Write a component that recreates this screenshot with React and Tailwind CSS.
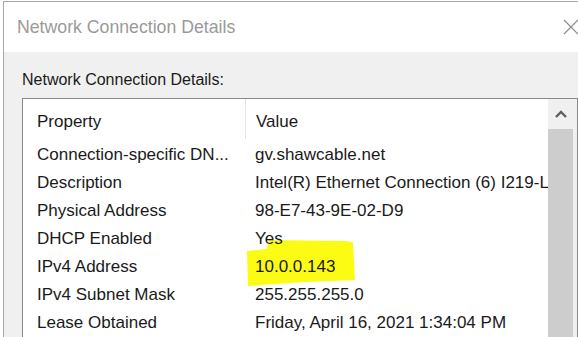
const rows = [
  ['Connection-specific DN...', 'gv.shawcable.net'],
  ['Description', 'Intel(R) Ethernet Connection (6) I219-LM'],
  ['Physical Address', '98-E7-43-9E-02-D9'],
  ['DHCP Enabled', 'Yes'],
  ['IPv4 Address', '10.0.0.143'],
  ['IPv4 Subnet Mask', '255.255.255.0'],
  ['Lease Obtained', 'Friday, April 16, 2021 1:34:04 PM'],
];

export default function App() {
  return (
    <div
      className="w-[578px] h-[337px] overflow-hidden bg-white"
      style={{ fontFamily: '"Liberation Sans", Arial, sans-serif' }}
    >
      <div className="ml-[3px] mt-[1px] w-[600px] h-[400px] border-l border-t border-[#a8a8a8] flex flex-col">
        {/* title bar */}
        <div className="h-[50px] bg-white flex items-center pl-[13px] relative">
          <span className="text-[17.7px] text-[#9a9a9a]">Network Connection Details</span>
          <svg
            className="absolute left-[559px] top-[17px]"
            width="16"
            height="16"
            viewBox="0 0 16 16"
          >
            <path d="M1 1 L15 15 M15 1 L1 15" stroke="#8a8a8a" strokeWidth="1.2" fill="none" />
          </svg>
        </div>

        {/* body */}
        <div className="flex-1 bg-[#f0f0f0] pl-[18px] pt-[18px]">
          <div className="text-[16px] leading-[20px] text-[#1a1a1a] h-[28px]">Network Connection Details:</div>

          <div className="w-[556px] h-[260px] border border-[#8a8a8a] bg-white flex text-[#1a1a1a]">
            <div className="flex-1 min-w-0 overflow-hidden flex flex-col">
              {/* header */}
              <div className="h-[42px] flex">
                <div className="w-[223px] shrink-0 h-[40px] border-r border-[#e4e4e4] pl-[14px] pt-[13px] text-[17px] leading-[20px]">
                  Property
                </div>
                <div className="pl-[10px] pt-[13px] text-[17px] leading-[20px]">Value</div>
              </div>
              {/* rows */}
              <div className="relative">
                <svg
                  className="absolute left-[222px] top-[97px]"
                  width="112"
                  height="50"
                  viewBox="0 0 112 50"
                >
                  <path
                    d="M2 13 L22 11 L24 2 L100 3 L108 4 L110 42 L60 44 L3 48 Z"
                    fill="#fbfb14"
                  />
                </svg>
                {rows.map(([k, v]) => (
                  <div key={k} className="relative h-[27.9px] flex items-center text-[17px] whitespace-nowrap">
                    <div className="w-[222px] shrink-0 pl-[14px]">{k}</div>
                    <div className="pl-[10px]">{v}</div>
                  </div>
                ))}
              </div>
            </div>
            {/* scrollbar */}
            <div className="w-[29px] shrink-0 bg-[#f0f0f0] flex flex-col items-start">
              <div className="w-[26px] h-[30px] flex items-center justify-center">
                <svg width="12" height="8" viewBox="0 0 12 8">
                  <path d="M1 7 L6 2 L11 7" stroke="#606060" strokeWidth="2.4" fill="none" />
                </svg>
              </div>
              <div className="w-[25px] flex-1 bg-[#cdcdcd]" />
            </div>
          </div>
        </div>
      </div>
    </div>
  );
}
